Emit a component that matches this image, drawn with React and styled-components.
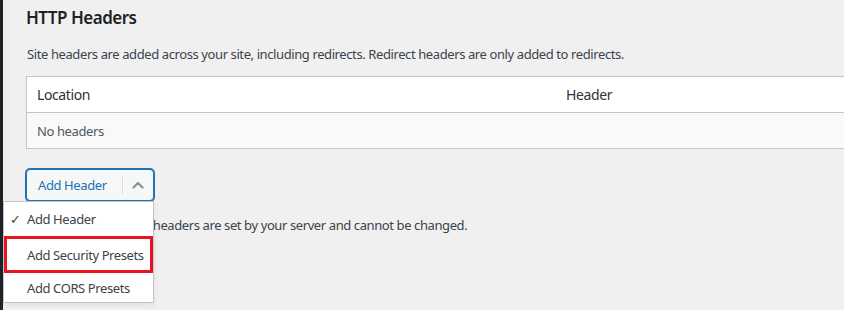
import React from "react"
import styled, { createGlobalStyle } from "styled-components"

const GlobalStyle = createGlobalStyle`
  html, body {
    margin: 0;
    padding: 0;
    background: #f0f0f1;
    overflow: hidden;
  }
  body {
    font-family: "Noto Sans", "Open Sans", sans-serif;
    font-size: 13px;
    letter-spacing: -0.4px;
    color: #3c434a;
  }
`

const Layout = styled.div`
  display: flex;
  width: 844px;
  height: 310px;
  overflow: hidden;
`

const AdminMenu = styled.div`
  flex: 0 0 3px;
  background: #1d2327;
`

const Content = styled.div`
  flex: 1;
  padding-left: 23px;
  min-width: 0;
`

const Title = styled.h2`
  margin: 0;
  padding-top: 6px;
  font-size: 17px;
  line-height: 24px;
  font-weight: 600;
  letter-spacing: -0.5px;
  color: #1d2327;
`

const Description = styled.p`
  margin: 15px 0 0 1px;
  line-height: 18px;
`

const Table = styled.table`
  margin-top: 13px;
  width: 880px;
  border-collapse: collapse;
  background: #fff;
  border: 1px solid #c3c4c7;
`

const HeadCell = styled.th`
  text-align: left;
  font-weight: 400;
  color: #2c3338;
  height: 35px;
  padding: 0 10px;
  font-size: 14px;
  width: ${p => p.$width || "auto"};
  border-bottom: 1px solid #c3c4c7;
`

const BodyCell = styled.td`
  height: 35px;
  padding: 0 10px;
  background: #f9f9f9;
  color: #50575e;
`

const Actions = styled.div`
  position: relative;
  margin-top: 20px;
  display: inline-flex;
`

const SplitButton = styled.div`
  display: flex;
  align-items: center;
  height: 30px;
  width: 126px;
  box-sizing: content-box;
  border: 1px solid #2271b1;
  box-shadow: 0 0 0 1px #2271b1;
  border-radius: 4px;
  background: #f6f7f7;
  color: #2271b1;
  font-size: 13px;
`

const ButtonLabel = styled.span`
  padding: 0 15px 0 11px;
  line-height: 30px;
  white-space: nowrap;
`

const Separator = styled.span`
  width: 1px;
  height: 18px;
  background: #dcdcde;
`

const Caret = styled.span`
  display: flex;
  align-items: center;
  justify-content: center;
  flex: 1;
  color: #8c8f94;
`

const Menu = styled.ul`
  position: absolute;
  top: 32px;
  left: -23px;
  width: 149px;
  margin: 0;
  padding: 0;
  list-style: none;
  background: #fff;
  border: 1px solid #c3c4c7;
  box-shadow: 0 2px 6px rgba(0, 0, 0, 0.08);
  z-index: 2;
`

const MenuItem = styled.li`
  position: relative;
  display: flex;
  align-items: center;
  box-sizing: border-box;
  height: ${p => p.$height}px;
  padding: 0 ${p => (p.$highlighted ? 20 : 23)}px;
  line-height: 18px;
  white-space: nowrap;
  color: #3c434a;
  border: ${p => (p.$highlighted ? "3px solid #e8141f" : "none")};
`

const Check = styled.span`
  position: absolute;
  left: 6px;
  top: 50%;
  transform: translateY(-50%);
  line-height: 18px;
`

const Note = styled.p`
  margin: 15px 0 0 1px;
  line-height: 18px;
`

const ChevronUp = () => (
  <svg width="12" height="8" viewBox="0 0 12 8" fill="none">
    <path
      d="M1.5 6.5 6 2l4.5 4.5"
      stroke="currentColor"
      strokeWidth="2.2"
      strokeLinecap="round"
      strokeLinejoin="round"
    />
  </svg>
)

const App = () => {
  return (
    <>
      <GlobalStyle />
      <Layout>
        <AdminMenu />
        <Content>
          <Title>HTTP Headers</Title>
          <Description>
            Site headers are added across your site, including redirects. Redirect headers are only added to redirects.
          </Description>
          <Table>
            <thead>
              <tr>
                <HeadCell $width="509px">Location</HeadCell>
                <HeadCell>Header</HeadCell>
              </tr>
            </thead>
            <tbody>
              <tr>
                <BodyCell colSpan={2}>No headers</BodyCell>
              </tr>
            </tbody>
          </Table>
          <Actions>
            <SplitButton>
              <ButtonLabel>Add Header</ButtonLabel>
              <Separator />
              <Caret>
                <ChevronUp />
              </Caret>
            </SplitButton>
            <Menu>
              <MenuItem $height={34}>
                <Check>✓</Check>Add Header
              </MenuItem>
              <MenuItem $height={37} $highlighted>
                Add Security Presets
              </MenuItem>
              <MenuItem $height={29}>Add CORS Presets</MenuItem>
            </Menu>
          </Actions>
          <Note>Note that some HTTP headers are set by your server and cannot be changed.</Note>
        </Content>
      </Layout>
    </>
  )
}

export default App
